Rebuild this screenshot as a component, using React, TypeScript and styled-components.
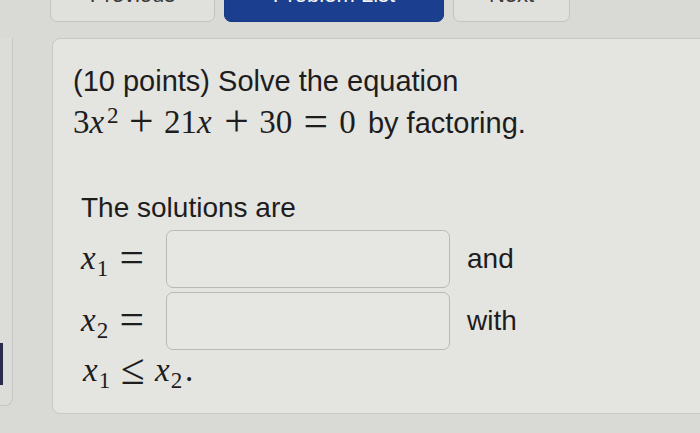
import React from "react";
import styled, { createGlobalStyle } from "styled-components";

const GlobalStyle = createGlobalStyle`
  html, body { margin: 0; padding: 0; }
  body { background: #d9d9d6; font-family: "Liberation Sans", Arial, sans-serif; }
`;

const Page = styled.div`
  width: 700px;
  height: 433px;
  overflow: hidden;
  background: #d9d9d6;
  color: #1d1d1d;
`;

const TopBar = styled.div`
  height: 22px;
  overflow: hidden;
  display: flex;
  align-items: flex-end;
  gap: 9px;
  padding-left: 50px;
`;

const NavButton = styled.div<{ $primary?: boolean; $w: number }>`
  width: ${(p) => p.$w}px;
  height: 50px;
  box-sizing: border-box;
  flex: none;
  border-radius: 7px;
  padding-top: 11px;
  font-size: 22px;
  line-height: 22px;
  text-align: center;
  background: ${(p) => (p.$primary ? "#1b3f8e" : "#e0e0dd")};
  color: ${(p) => (p.$primary ? "#f2f4f8" : "#3a3a3a")};
  border: 1.5px solid ${(p) => (p.$primary ? "#183a84" : "#c3c3c0")};
`;

const Body = styled.div`
  display: flex;
  align-items: flex-start;
  margin-top: 16px;
`;

const SideRail = styled.div`
  width: 13px;
  height: 368px;
  flex: none;
  box-sizing: border-box;
  background: #dcdcd9;
  border-right: 1.5px solid #c6c6c3;
  border-bottom: 1.5px solid #c6c6c3;
  border-bottom-right-radius: 8px;
  display: flex;
  flex-direction: column;
  padding-top: 305px;
`;

const RailMarker = styled.div`
  width: 3px;
  height: 42px;
  background: #2c2b4c;
`;

const ProblemCard = styled.div`
  flex: none;
  width: 680px;
  margin-left: 39px;
  box-sizing: border-box;
  background: #e4e4e1;
  border: 1.5px solid #c8c8c5;
  border-radius: 8px;
  padding: 22px 20px 21px 20px;
`;

const Prompt = styled.div`
  font-size: 29px;
  line-height: 41px;
`;

const Line = styled.div`
  white-space: nowrap;
`;

const Math = styled.span<{ $gap?: number }>`
  font-family: "Liberation Serif", "Times New Roman", serif;
  font-size: 33px;
  margin-right: ${(p) => p.$gap ?? 0}px;
`;

const Var = styled.i`
  font-style: italic;
  padding-right: 0.06em;
`;

const Sup = styled.span`
  font-size: 70%;
  line-height: 0;
  vertical-align: 0.45em;
  margin-left: 0.04em;
`;

const Sub = styled.span`
  font-size: 70%;
  line-height: 0;
  vertical-align: -0.3em;
  margin-left: -0.04em;
`;

const Op = styled.span<{ $space: number }>`
  font-size: 1.32em;
  line-height: 0;
  vertical-align: -0.06em;
  margin: 0 ${(p) => p.$space}em;
`;

const Answer = styled.div`
  margin-top: 44px;
  margin-left: 8px;
  font-size: 28px;
  line-height: 40px;
`;

const AnswerGrid = styled.div`
  margin-top: 2px;
  display: grid;
  grid-template-columns: 85px 284px auto;
  row-gap: 4px;
  align-items: center;
`;

const Label = styled.div`
  white-space: nowrap;
`;

const AnswerInput = styled.input`
  box-sizing: border-box;
  width: 284px;
  height: 58px;
  border: 1.5px solid #b9b9b6;
  border-radius: 7px;
  background: #e6e7e3;
  outline: none;
  font-size: 24px;
`;

const Word = styled.div`
  white-space: nowrap;
  margin-left: 17px;
`;

const Condition = styled.div`
  margin-left: 2px;
`;

const Dot = styled.span`
  margin-left: 0.08em;
`;

export default function App() {
  return (
    <Page>
      <GlobalStyle />
      <TopBar>
        <NavButton $w={165}>Previous</NavButton>
        <NavButton $primary $w={220}>Problem List</NavButton>
        <NavButton $w={117}>Next</NavButton>
      </TopBar>
      <Body>
        <SideRail>
          <RailMarker />
        </SideRail>
        <ProblemCard>
          <Prompt>
            <Line>(10 points) Solve the equation</Line>
            <Line>
              <Math $gap={4}>
                3<Var>x</Var>
                <Sup>2</Sup>
                <Op $space={0.24}>+</Op>21<Var>x</Var>
                <Op $space={0.24}>+</Op>30<Op $space={0.26}>=</Op>0
              </Math>{" "}
              by factoring.
            </Line>
          </Prompt>
          <Answer>
            <div>The solutions are</div>
            <AnswerGrid>
              <Label>
                <Math>
                  <Var>x</Var>
                  <Sub>1</Sub>
                  <Op $space={0.26}>=</Op>
                </Math>
              </Label>
              <AnswerInput aria-label="x1" />
              <Word>and</Word>
              <Label>
                <Math>
                  <Var>x</Var>
                  <Sub>2</Sub>
                  <Op $space={0.26}>=</Op>
                </Math>
              </Label>
              <AnswerInput aria-label="x2" />
              <Word>with</Word>
            </AnswerGrid>
            <Condition>
              <Math>
                <Var>x</Var>
                <Sub>1</Sub>
                <Op $space={0.24}>≤</Op>
                <Var>x</Var>
                <Sub>2</Sub>
                <Dot>.</Dot>
              </Math>
            </Condition>
          </Answer>
        </ProblemCard>
      </Body>
    </Page>
  );
}
